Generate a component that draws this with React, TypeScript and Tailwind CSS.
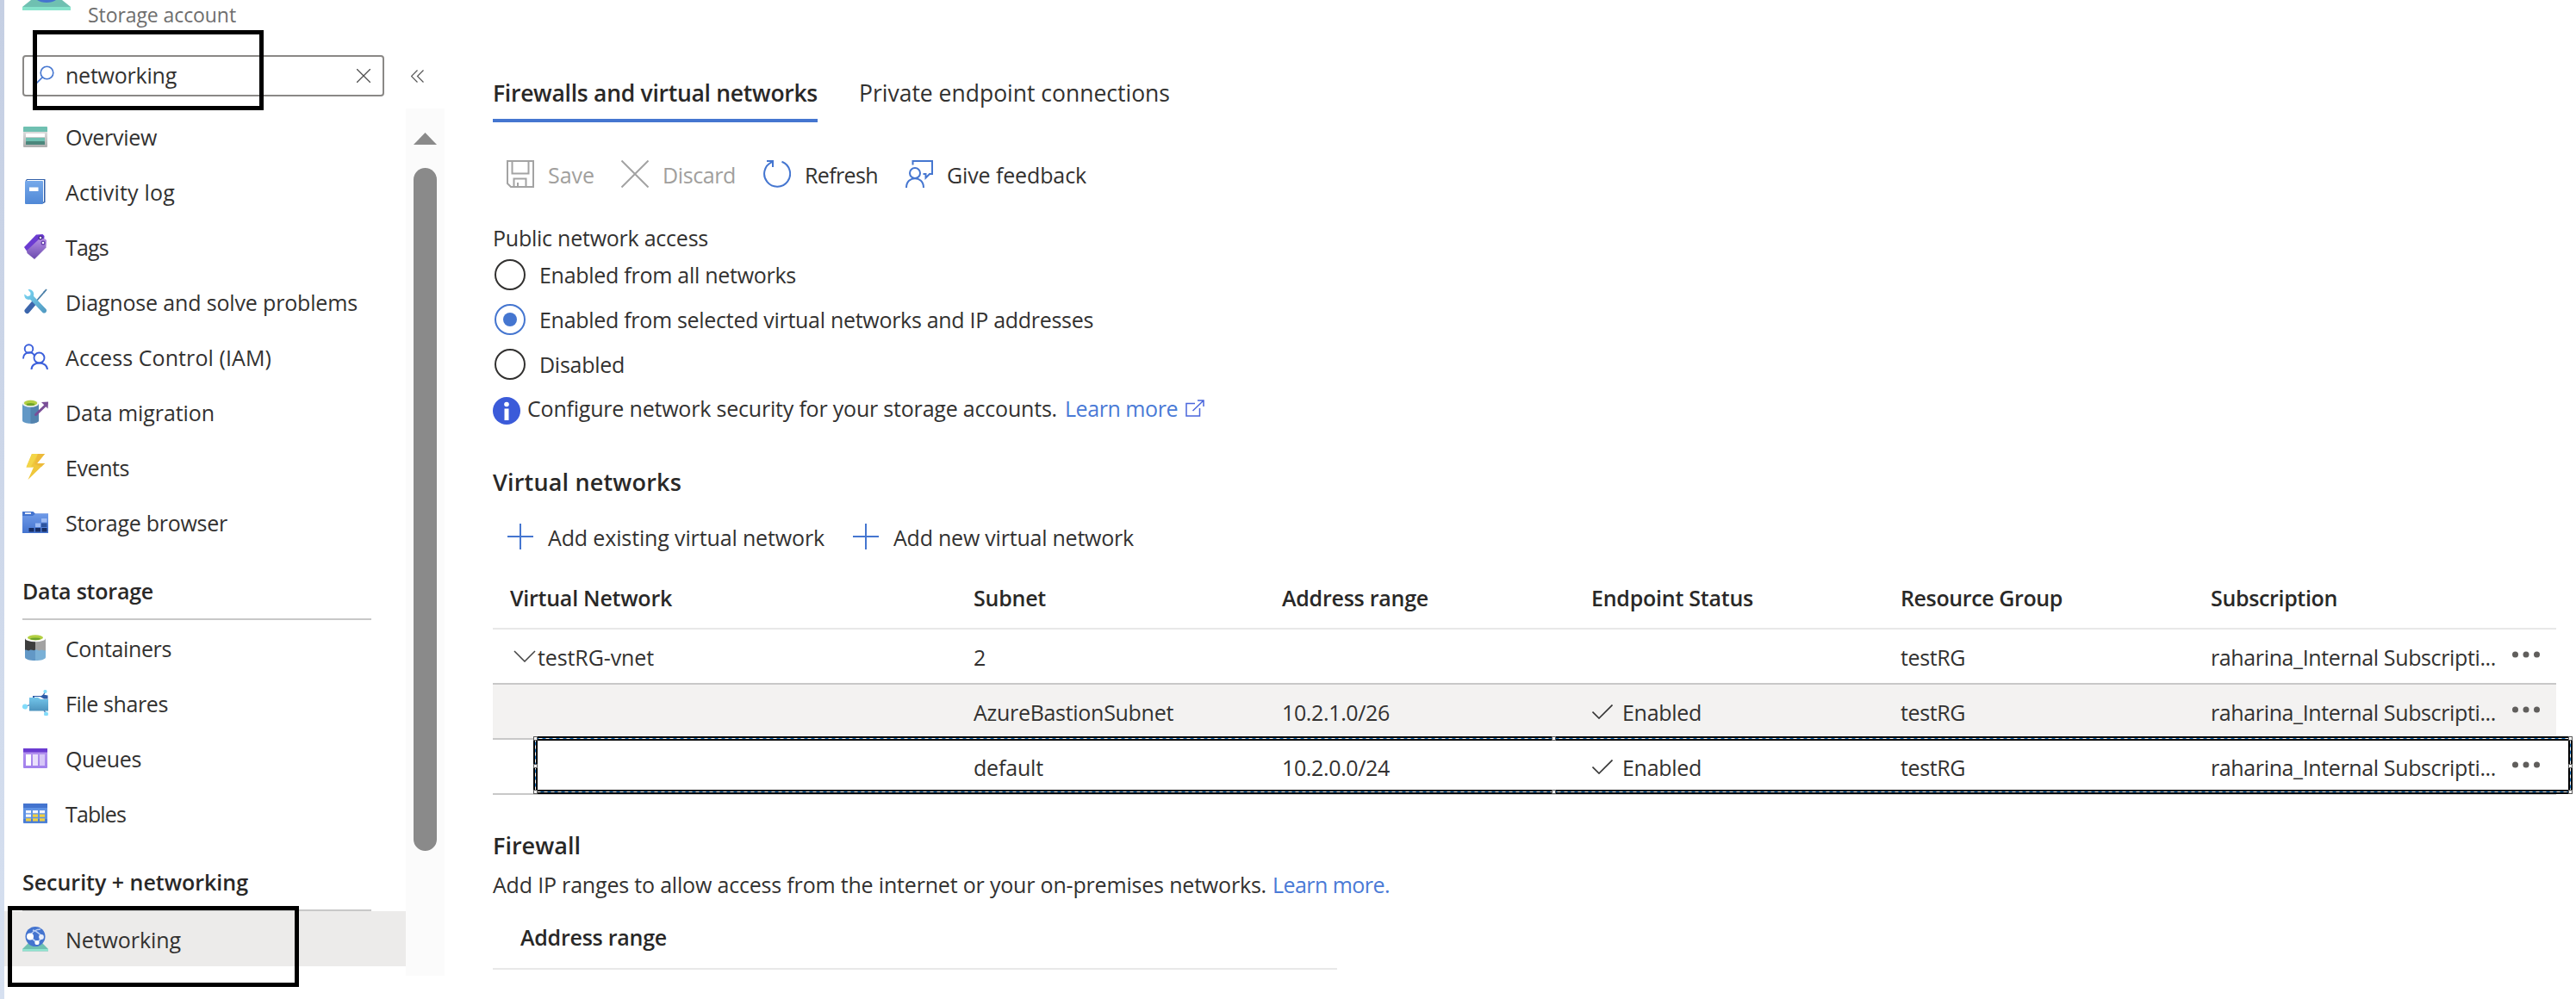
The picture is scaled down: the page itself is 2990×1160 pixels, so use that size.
import { useLayoutEffect, useRef, type ReactNode } from "react";

/** Single line of text whose tracking is adjusted so that it spans a given width. */
function Label({ w, children, className = "text-[25px]" }: { w: number; children: string; className?: string }) {
  const ref = useRef<HTMLSpanElement>(null);
  useLayoutEffect(() => {
    const el = ref.current;
    if (!el) return;
    el.style.letterSpacing = "0px";
    const natural = el.getBoundingClientRect().width;
    el.style.letterSpacing = `${(w - natural) / children.length}px`;
  }, [w, children]);
  return (
    <span ref={ref} className={`inline-block shrink-0 whitespace-pre leading-8 ${className}`}>
      {children}
    </span>
  );
}

/* ---------- sidebar icons (30 x 30 grid) ---------- */

function Svg({ children }: { children: ReactNode }) {
  return (
    <svg viewBox="0 0 30 30" className="h-[30px] w-[30px] shrink-0" fill="none">
      {children}
    </svg>
  );
}

const OverviewIcon = () => (
  <Svg>
    <defs>
      <linearGradient id="ov" x1="0" y1="0" x2="0" y2="1">
        <stop offset="0" stopColor="#ececec" />
        <stop offset="1" stopColor="#adadad" />
      </linearGradient>
    </defs>
    <rect x="1" y="4" width="28" height="24" rx="1" fill="url(#ov)" />
    <path d="M1 5a1 1 0 0 1 1-1h26a1 1 0 0 1 1 1v5H1z" fill="#6fc0b1" />
    <rect x="4" y="12" width="22" height="4" rx=".6" fill="#fff" />
    <rect x="4" y="17" width="22" height="4" fill="#6fc0b1" />
    <rect x="4" y="21" width="22" height="4" rx=".6" fill="#4c877c" />
  </Svg>
);

const ActivityIcon = () => (
  <Svg>
    <defs>
      <linearGradient id="ac" x1="0" y1="0" x2="0" y2="1">
        <stop offset="0" stopColor="#76a9ea" />
        <stop offset="1" stopColor="#5088d6" />
      </linearGradient>
    </defs>
    <path d="M5 1h21.500v27l-3 1.500V3H3.500z" fill="#315fa8" />
    <path d="M6 2h19v25l-2 1.500V3H4.500z" fill="#fff" />
    <rect x="3" y="3" width="21" height="27" rx="1" fill="url(#ac)" />
    <rect x="8" y="10.500" width="10.500" height="4.500" fill="#fff" />
  </Svg>
);

const TagsIcon = () => (
  <Svg>
    <defs>
      <linearGradient id="tg" x1="0" y1="0" x2="0" y2="1">
        <stop offset="0" stopColor="#b48ee4" />
        <stop offset="1" stopColor="#6b4aae" />
      </linearGradient>
    </defs>
    <path d="M2 16 16 1.500l7.500-.5 2 2-.5 8L11 23l-5-1z" fill="#6b3bd1" />
    <path d="M5 20 20 6l6.500.500L28 8l-.500 8.500L14 30 5.500 23z" fill="url(#tg)" />
    <circle cx="21" cy="5" r="1.900" fill="#fff" stroke="#442a86" strokeWidth="1.200" />
    <circle cx="24" cy="11" r="1.900" fill="#fff" stroke="#5f3aa8" strokeWidth="1.200" />
  </Svg>
);

const DiagnoseIcon = () => (
  <Svg>
    <defs>
      <linearGradient id="dg" x1="0" y1="0" x2="1" y2="1">
        <stop offset="0" stopColor="#7cd8f5" />
        <stop offset="1" stopColor="#4f97bf" />
      </linearGradient>
    </defs>
    <path d="M28 1 15 16" stroke="#4a7fa8" strokeWidth="1.800" />
    <path d="m24 4 4-3-2.500 4.500z" fill="#4a7fa8" />
    <path d="m14.500 15.500-9 10.500" stroke="#3c66ac" strokeWidth="6" strokeLinecap="round" />
    <path
      d="M6.500 1.200c3-.8 6.500 1.500 6.700 5 .1 1-.1 1.800-.3 2.600L27.500 24c2 2.600-1.500 6-4 4L9 12.800c-4 .9-7.300-2-6.700-6.300L6 9.200l3.200-1.200.3-3z"
      fill="url(#dg)"
    />
  </Svg>
);

const AccessIcon = () => (
  <Svg>
    <g stroke="#3b5fdb" strokeWidth="1.900">
      <circle cx="7.500" cy="6" r="4.800" />
      <circle cx="19.500" cy="16.500" r="6" />
      <path d="M1 17.500c0-8 10-9.500 13-3.500M10.500 30c0-10 18-10 18.500 0" />
    </g>
  </Svg>
);

const MigrationIcon = () => (
  <Svg>
    <path d="M0 6v19c0 5 19 5 19 0V6z" fill="#6298c6" />
    <path d="M9.500 8v20.700c5 0 9.500-1.200 9.500-3.700V6z" fill="#5383ae" />
    <ellipse cx="9.500" cy="5.500" rx="9.500" ry="4.300" fill="#f4f6f4" />
    <ellipse cx="9.500" cy="5" rx="7.700" ry="3.300" fill="#b3d043" />
    <ellipse cx="9.500" cy="6.500" rx="5" ry="1.600" fill="#6fa42c" />
    <path d="M15.500 18.500 27 7.500" stroke="#7a4e97" strokeWidth="3" strokeLinecap="round" />
    <path d="m22 4 8-.500-.500 8z" fill="#7a4e97" />
  </Svg>
);

const EventsIcon = () => (
  <Svg>
    <path d="M11 0h15L17 11h9L6.500 30 13 15.500H4.500z" fill="#efc73b" />
    <path d="M11 0h7L10 14.500l3 1H4.500z" fill="#f3d548" />
    <path d="M18 0h8L17 11h9l-4 4-8-3z" fill="#edba3a" />
  </Svg>
);

const BrowserIcon = () => (
  <Svg>
    <defs>
      <linearGradient id="sb" x1="0" y1="0" x2="0" y2="1">
        <stop offset="0" stopColor="#6f9ae8" />
        <stop offset="1" stopColor="#4474cf" />
      </linearGradient>
    </defs>
    <path d="M0 3h12.500l2.500 2.500h15V12H0z" fill="#4474cf" />
    <path d="M0 8h12l3-2.500h15V28H0z" fill="url(#sb)" />
    <rect x="3" y="4.200" width="7" height="1.700" fill="#fff" />
    <rect x="22" y="11" width="6.500" height="4.500" fill="#9dbbf3" />
    <rect x="15" y="16.500" width="6" height="4.500" fill="#9dbbf3" />
    <rect x="22" y="16.500" width="6.500" height="4.500" fill="#2e559f" />
    <path d="M7.500 22h6v4.500h-6zM15 22h6v4.500h-6zM22.500 22h6v4.500h-6z" fill="#182f66" />
  </Svg>
);

const ContainersIcon = () => (
  <Svg>
    <path d="M3 4h12v16H3z" fill="#3d3d3d" />
    <path d="M15 4h12v16H15z" fill="#a2a2a2" />
    <path d="M3 18c2-1.500 3 1.500 5.500 0 2-1.500 4 1.500 6.500-.5V30C8 30 3 28.500 3 26z" fill="#6298c6" />
    <path d="M15 17.500c2-1 3.500 2 6 .5 2-1.500 4 1.500 6 0v8c0 2.500-5 4-12 4z" fill="#7ab0d6" />
    <ellipse cx="15" cy="4" rx="12" ry="4.300" fill="#fff" />
    <ellipse cx="15" cy="3.300" rx="9" ry="3" fill="#b3d043" />
    <ellipse cx="15" cy="4.800" rx="6" ry="1.400" fill="#6fa42c" />
  </Svg>
);

const SharesIcon = () => (
  <Svg>
    <defs>
      <linearGradient id="fs" x1="0" y1="0" x2="0" y2="1">
        <stop offset="0" stopColor="#72c5ea" />
        <stop offset="1" stopColor="#4d93bd" />
      </linearGradient>
    </defs>
    <path d="M3 19.500 10 17M26.500 2l-3 6M27.500 28l-4-7" stroke="#3f6db0" strokeWidth="1.300" />
    <path d="M12 7h10l2-1.500 5.500 1V16H12z" fill="#2f5ca8" />
    <path d="M14 8h7l4 2.500h4.500V15H14z" fill="#e9f4fb" />
    <path d="M8 9h10l3 2h9v13.500H8z" fill="url(#fs)" />
    <circle cx="3" cy="19.500" r="3.100" fill="#83dcfa" />
    <circle cx="26.500" cy="2" r="2.100" fill="#83dcfa" />
    <circle cx="27.500" cy="28" r="2.500" fill="#83dcfa" />
  </Svg>
);

const QueuesIcon = () => (
  <Svg>
    <defs>
      <linearGradient id="qu" x1="0" y1="0" x2="0" y2="1">
        <stop offset="0" stopColor="#b795ef" />
        <stop offset="1" stopColor="#a180ec" />
      </linearGradient>
    </defs>
    <rect x="1" y="4" width="28" height="23" rx="1" fill="url(#qu)" />
    <path d="M1 4h28v4.500H1z" fill="#6b3bd1" />
    <rect x="4" y="11" width="6" height="13" fill="#fff" />
    <rect x="12" y="11" width="6" height="13" fill="#e9e0fb" />
    <rect x="20" y="11" width="6" height="13" fill="#d6c6f7" />
  </Svg>
);

const TablesIcon = () => (
  <Svg>
    <rect x="1" y="4" width="28" height="23" rx="1" fill="#5f92e4" />
    <path d="M1 22h28v4.500H1z" fill="#4a7cd4" />
    <path d="M1 4h28v5H1z" fill="#4474cf" />
    <path d="M4 12h6v3.300H4zM12 12h6v3.300h-6zM20 12h6v3.300h-6zM4 16.500h6v3.300H4z" fill="#f3f6fc" />
    <path d="M12 16.500h6v3.300h-6zM20 16.500h6v3.300h-6zM4 21.300h6v3.200H4zM12 21.300h6v3.200h-6zM20 21.300h6v3.200h-6z" fill="#f0cf40" />
  </Svg>
);

const NetworkingIcon = () => (
  <Svg>
    <path d="M8 19h14l8 8v2.500H0V27z" fill="#6fc0b1" />
    <path d="M0 27h30v2H0z" fill="#8fe5cf" />
    <circle cx="15" cy="12.500" r="11.500" fill="#4474cf" />
    <path d="M9 12c2-5 7-8 12-8M12 5c4 1 8 4 11 8M9 13l8 6.500 6-6" stroke="#b9cff5" strokeWidth="1.700" />
    <circle cx="9" cy="12.500" r="4" fill="#fff" />
    <circle cx="22" cy="13" r="2.900" fill="#e8eefb" />
    <circle cx="17" cy="19.500" r="2.600" fill="#fff" />
  </Svg>
);

function NavItem({ icon, label, w, active = false }: { icon: ReactNode; label: string; w: number; active?: boolean }) {
  return (
    <div className={`flex h-16 gap-5 pl-[21px] pt-[17px] ${active ? "bg-[#ecebea]" : ""}`}>
      {icon}
      <Label w={w}>{label}</Label>
    </div>
  );
}

function NavSection({ label, w }: { label: string; w: number }) {
  return (
    <div className="ml-[21px] h-[82px] w-[405px] border-b-2 border-[#c8c8c8] pt-8">
      <Label w={w} className="text-[25px] font-semibold text-[#292827]">{label}</Label>
    </div>
  );
}

function Sidebar() {
  return (
    <aside className="relative flex w-[516px] shrink-0">
      <div className="w-[5px] bg-linear-to-b from-[#c5cfe3] to-[#d6e0f0]" />
      <div className="flex flex-1 flex-col">
        <div className="flex h-16">
          <svg viewBox="0 0 56 12" className="ml-[21px] h-3 w-14 shrink-0">
            <path d="M10 0h36l10 8H0z" fill="#6fc0b1" />
            <path d="M0 8h56v4H0z" fill="#86e3cb" />
            <path d="M17 0h22c-5 4-17 4-22 0" fill="#4474cf" />
          </svg>
          <div className="ml-5 mt-px">
            <Label w={172} className="text-[23px] text-[#6e6e6e]">Storage account</Label>
          </div>
        </div>
        <div className="flex h-[62px] items-start">
          <div className="ml-[21px] flex h-12 w-[420px] rounded border-2 border-[#8a8886]">
            <svg viewBox="0 0 21 21" className="ml-[14px] mt-[10px] h-[21px] w-[21px] shrink-0" fill="none" stroke="#4576d0" strokeWidth="1.600">
              <circle cx="12.500" cy="8.500" r="7.300" />
              <path d="m7.500 13.500-7 7" />
            </svg>
            <div className="ml-[13px] mt-[5px]">
              <Label w={129}>networking</Label>
            </div>
            <svg viewBox="0 0 16 16" className="ml-auto mr-[14px] mt-[14px] h-4 w-4 shrink-0" stroke="#4f4f4f" strokeWidth="1.300">
              <path d="m0 0 16 16M16 0 0 16" />
            </svg>
          </div>
          <svg viewBox="0 0 15 15" className="ml-[31px] mt-[17px] h-[15px] w-[15px] shrink-0" fill="none" stroke="#555" strokeWidth="1.200">
            <path d="M7.500.500.500 7.500l7 7M14.500.500l-7 7 7 7" />
          </svg>
        </div>
        <div className="flex">
          <nav className="w-[466px]">
            <NavItem icon={<OverviewIcon />} label="Overview" w={106} />
            <NavItem icon={<ActivityIcon />} label="Activity log" w={127} />
            <NavItem icon={<TagsIcon />} label="Tags" w={50} />
            <NavItem icon={<DiagnoseIcon />} label="Diagnose and solve problems" w={339} />
            <NavItem icon={<AccessIcon />} label="Access Control (IAM)" w={239} />
            <NavItem icon={<MigrationIcon />} label="Data migration" w={173} />
            <NavItem icon={<EventsIcon />} label="Events" w={74} />
            <NavItem icon={<BrowserIcon />} label="Storage browser" w={188} />
            <NavSection label="Data storage" w={152} />
            <NavItem icon={<ContainersIcon />} label="Containers" w={123} />
            <NavItem icon={<SharesIcon />} label="File shares" w={119} />
            <NavItem icon={<QueuesIcon />} label="Queues" w={88} />
            <NavItem icon={<TablesIcon />} label="Tables" w={70} />
            <NavSection label="Security + networking" w={262} />
            <NavItem icon={<NetworkingIcon />} label="Networking" w={134} active />
          </nav>
          <div className="flex h-[1007px] w-[45px] flex-col items-center bg-[#fbfbfb] pt-7">
            <svg viewBox="0 0 27 14" className="h-[14px] w-[27px]">
              <path d="M13.500 0 27 14H0z" fill="#8a8a8a" />
            </svg>
            <div className="mt-[27px] h-[793px] w-[27px] rounded-full bg-[#8a8a8a]" />
          </div>
        </div>
      </div>
      <div className="absolute left-[38px] top-[35px] h-[93px] w-[268px] border-[5px] border-black" />
      <div className="absolute left-[9px] top-[1052px] h-[94px] w-[338px] border-[5px] border-black" />
    </aside>
  );
}

/* ---------- main area ---------- */

const ToolSvg = ({ color, children }: { color: string; children: ReactNode }) => (
  <svg viewBox="0 0 32 32" className="h-8 w-8 shrink-0" fill="none" stroke={color} strokeWidth="2">
    {children}
  </svg>
);

function Toolbar() {
  return (
    <div className="ml-4 mt-11 flex h-8">
      <ToolSvg color="#a3a3a3">
        <path d="M1 1h30v30H5l-4-4zM6.500 1v14.500h19V1M8.500 31v-9.500h14V31M13 31v-5" />
      </ToolSvg>
      <div className="ml-4 mt-px text-[#a19f9d]"><Label w={54}>Save</Label></div>
      <div className="ml-[31px]">
        <ToolSvg color="#a3a3a3">
          <path d="m.5.500 31 31M31.500.500l-31 31" />
        </ToolSvg>
      </div>
      <div className="ml-4 mt-px text-[#a19f9d]"><Label w={85}>Discard</Label></div>
      <div className="ml-8">
        <ToolSvg color="#4576d0">
          <path d="M21.500 1.800a15 15 0 1 1-11.500.300M4 1h7v7" />
        </ToolSvg>
      </div>
      <div className="ml-4 mt-px"><Label w={85}>Refresh</Label></div>
      <div className="ml-8">
        <ToolSvg color="#4576d0">
          <path d="M8.500 5.500V1h22.500v15h-3l-4.500 4.500V16H20.500" />
          <circle cx="11" cy="15" r="6" />
          <path d="M1 32c0-14.500 20-14.500 20 0" />
        </ToolSvg>
      </div>
      <div className="ml-4 mt-px"><Label w={162}>Give feedback</Label></div>
    </div>
  );
}

function Radio({ label, w, checked = false }: { label: string; w: number; checked?: boolean }) {
  return (
    <div className="flex h-9 items-center gap-4">
      <span
        className={`flex h-9 w-9 items-center justify-center rounded-full border-2 ${checked ? "border-[#4576d0]" : "border-[#323130]"}`}
      >
        {checked && <span className="h-4 w-4 rounded-full bg-[#4576d0]" />}
      </span>
      <Label w={w}>{label}</Label>
    </div>
  );
}

const Plus = () => (
  <svg viewBox="0 0 30 30" className="h-[30px] w-[30px] shrink-0" stroke="#4576d0" strokeWidth="2">
    <path d="M15 0v30M0 15h30" />
  </svg>
);

const Dots = () => (
  <svg viewBox="0 0 32 8" className="mt-[9px] h-2 w-8" fill="#605e5c">
    <circle cx="3.500" cy="4" r="3.500" />
    <circle cx="16" cy="4" r="3.500" />
    <circle cx="28.500" cy="4" r="3.500" />
  </svg>
);

const GRID = "grid h-16 grid-cols-[558px_358px_359px_359px_360px_350px_1fr] border-b-2";

const HEADERS = [
  { text: "Subnet", w: 84 },
  { text: "Address range", w: 170 },
  { text: "Endpoint Status", w: 188 },
  { text: "Resource Group", w: 188 },
  { text: "Subscription", w: 147 },
];

type RowData = { vnet?: boolean; subnet: string; sw: number; range?: string };

const ROWS: RowData[] = [
  { vnet: true, subnet: "2", sw: 14 },
  { subnet: "AzureBastionSubnet", sw: 232, range: "10.2.1.0/26" },
  { subnet: "default", sw: 81, range: "10.2.0.0/24" },
];

const MARKER_X = [0, 1182, 2362];
const MARKER_Y = [0, 32, 62];

/** Marching-ants outline with resize handles. */
function Selection() {
  return (
    <div className="absolute left-[47px] top-[-4px] h-[67px] w-[2367px] border-[5px] border-black">
      <svg viewBox="0 0 2367 67" className="absolute left-[-5px] top-[-5px] h-[67px] w-[2367px] max-w-none" fill="none">
        <rect x="2.500" y="2.500" width="2362" height="62" stroke="#fff" />
        <rect x="2.500" y="2.500" width="2362" height="62" stroke="#1473c5" strokeDasharray="4 4" />
        {MARKER_X.flatMap((x, i) =>
          MARKER_Y.map((y, j) =>
            i === 1 && j === 1 ? null : (
              <rect key={`${x}-${y}`} x={x + 0.5} y={y + 0.5} width="4" height="4" fill="#fff" stroke="#555" />
            ),
          ),
        )}
      </svg>
    </div>
  );
}

function VnetTable() {
  return (
    <div className="mt-[27px] w-[2395px]">
      <div className={`${GRID} border-[#e8e8e8] pt-[11px] font-semibold text-[#292827]`}>
        <div className="pl-5"><Label w={188}>Virtual Network</Label></div>
        {HEADERS.map((h) => (
          <div key={h.text}><Label w={h.w}>{h.text}</Label></div>
        ))}
      </div>
      {ROWS.map((r, i) => (
        <div key={r.subnet} className={`${GRID} relative border-[#c8c8c8] pt-4 ${i === 1 ? "bg-[#f3f2f1]" : ""}`}>
          <div className="flex pl-6">
            {r.vnet && (
              <>
                <svg viewBox="0 0 26 14" className="mr-0.5 mt-[8px] h-[14px] w-[26px]" fill="none" stroke="#444" strokeWidth="1.500">
                  <path d="m1 1 12 12L25 1" />
                </svg>
                <Label w={135}>testRG-vnet</Label>
              </>
            )}
          </div>
          <div><Label w={r.sw}>{r.subnet}</Label></div>
          <div>{r.range && <Label w={125}>{r.range}</Label>}</div>
          <div className="flex">
            {r.range && (
              <>
                <svg viewBox="0 0 24 17" className="ml-px mr-[11px] mt-[7px] h-[17px] w-6" fill="none" stroke="#333" strokeWidth="1.600">
                  <path d="m.5 8.500 7.500 7.500L23.500.500" />
                </svg>
                <Label w={92}>Enabled</Label>
              </>
            )}
          </div>
          <div><Label w={75}>testRG</Label></div>
          <div><Label w={331}>raharina_Internal Subscripti...</Label></div>
          <Dots />
          {i === 2 && <Selection />}
        </div>
      ))}
    </div>
  );
}

function Main() {
  return (
    <main className="ml-14 flex flex-1 flex-col items-start pt-[92px]">
      <div className="flex h-[50px] gap-12">
        <div className="border-b-4 border-[#4576d0]">
          <Label w={377} className="text-[26.500px] font-semibold text-[#292827]">Firewalls and virtual networks</Label>
        </div>
        <Label w={361} className="text-[26.500px]">Private endpoint connections</Label>
      </div>
      <Toolbar />
      <div className="mt-[42px]"><Label w={250}>Public network access</Label></div>
      <div className="ml-0.5 mt-[9px] flex flex-col gap-4">
        <Radio label="Enabled from all networks" w={298} />
        <Radio label="Enabled from selected virtual networks and IP addresses" w={643} checked />
        <Radio label="Disabled" w={99} />
      </div>
      <div className="mt-[17px] flex h-9">
        <svg viewBox="0 0 32 32" className="mt-[3px] h-8 w-8 shrink-0">
          <circle cx="16" cy="16" r="16" fill="#3b5bd9" />
          <circle cx="16" cy="8.500" r="2.800" fill="#fff" />
          <path d="M13.500 13.500h5V27h-5z" fill="#fff" />
        </svg>
        <div className="ml-2"><Label w={615}>Configure network security for your storage accounts.</Label></div>
        <div className="ml-[9px] text-[#4a7ad6]"><Label w={131}>Learn more</Label></div>
        <svg viewBox="0 0 22 20" className="ml-[9px] mt-[6px] h-5 w-[22px]" fill="none" stroke="#4a66dc" strokeWidth="1.500">
          <path d="M11 4.500H1V19h15.500v-9M14 1h7v7M21 1 8.500 13" />
        </svg>
      </div>
      <div className="mt-[50px]"><Label w={219} className="text-[27px] font-semibold text-[#292827]">Virtual networks</Label></div>
      <div className="ml-[17px] mt-8 flex h-8">
        <Plus />
        <div className="ml-[17px]"><Label w={321}>Add existing virtual network</Label></div>
        <div className="ml-[33px]"><Plus /></div>
        <div className="ml-[17px]"><Label w={279}>Add new virtual network</Label></div>
      </div>
      <VnetTable />
      <div className="mt-[43px]"><Label w={102} className="text-[27px] font-semibold text-[#292827]">Firewall</Label></div>
      <div className="mt-[13px] flex h-8">
        <Label w={898}>Add IP ranges to allow access from the internet or your on-premises networks.</Label>
        <div className="ml-[7px] text-[#4a7ad6]"><Label w={136}>Learn more.</Label></div>
      </div>
      <div className="mt-[19px] h-16 w-[980px] border-b-2 border-[#e8e8e8] pl-8 pt-[10px] font-semibold text-[#292827]">
        <Label w={170}>Address range</Label>
      </div>
    </main>
  );
}

export default function App() {
  return (
    <div className="flex h-[1160px] w-[2990px] overflow-hidden bg-white font-['Open_Sans',sans-serif] text-[#323130]">
      <Sidebar />
      <Main />
    </div>
  );
}
